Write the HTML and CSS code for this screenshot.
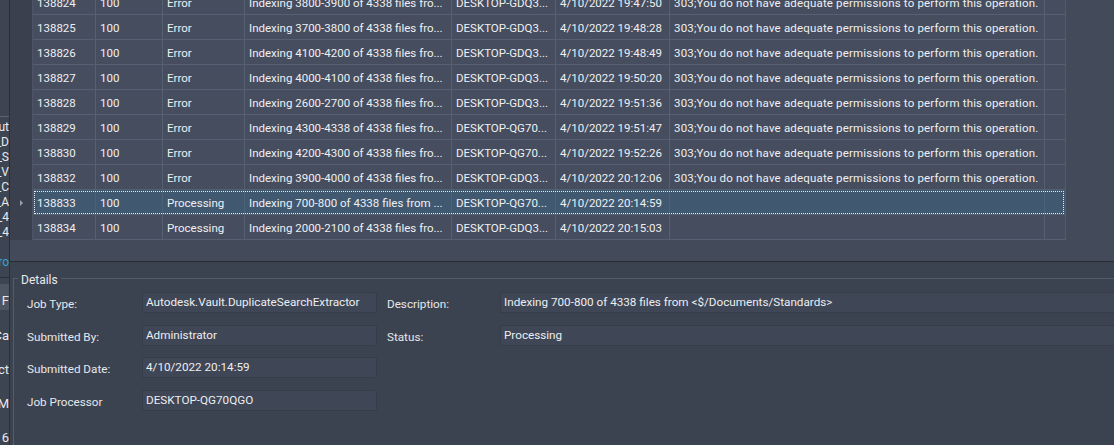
FILE: index.html
```html
<!DOCTYPE html>
<html lang="en">
<head>
<meta charset="utf-8">
<title>Job Queue</title>
<link rel="stylesheet" href="styles.css">
</head>
<body>
<div class="app">
  <aside class="side">
    <div class="side-top"></div>
    <div class="side-list">
      <div class="si">ut</div>
      <div class="si">_D</div>
      <div class="si">_S</div>
      <div class="si">_V</div>
      <div class="si">_C</div>
      <div class="si">_A</div>
      <div class="si">_4</div>
      <div class="si">_4</div>
      <div class="si"></div>
      <div class="si link">ro</div>
    </div>
    <div class="side-tree">
      <div class="ti sel">F</div>
      <div class="ti">Ca</div>
      <div class="ti">ct</div>
      <div class="ti">M</div>
      <div class="ti">16</div>
    </div>
  </aside>
  <main class="main">
    <section class="jobs">
      <div class="grid">
        <div class="row"><div class="rh"></div><div class="rc"><span class="c w1">138824</span><span class="c w2">100</span><span class="c w3">Error</span><span class="c w4">Indexing 3800-3900 of 4338 files fro...</span><span class="c w5">DESKTOP-GDQ3...</span><span class="c w6">4/10/2022 19:47:50</span><span class="c w7">303;You do not have adequate permissions to perform this operation.</span><span class="c w8"></span></div></div>
        <div class="row"><div class="rh"></div><div class="rc"><span class="c w1">138825</span><span class="c w2">100</span><span class="c w3">Error</span><span class="c w4">Indexing 3700-3800 of 4338 files fro...</span><span class="c w5">DESKTOP-GDQ3...</span><span class="c w6">4/10/2022 19:48:28</span><span class="c w7">303;You do not have adequate permissions to perform this operation.</span><span class="c w8"></span></div></div>
        <div class="row"><div class="rh"></div><div class="rc"><span class="c w1">138826</span><span class="c w2">100</span><span class="c w3">Error</span><span class="c w4">Indexing 4100-4200 of 4338 files fro...</span><span class="c w5">DESKTOP-GDQ3...</span><span class="c w6">4/10/2022 19:48:49</span><span class="c w7">303;You do not have adequate permissions to perform this operation.</span><span class="c w8"></span></div></div>
        <div class="row"><div class="rh"></div><div class="rc"><span class="c w1">138827</span><span class="c w2">100</span><span class="c w3">Error</span><span class="c w4">Indexing 4000-4100 of 4338 files fro...</span><span class="c w5">DESKTOP-GDQ3...</span><span class="c w6">4/10/2022 19:50:20</span><span class="c w7">303;You do not have adequate permissions to perform this operation.</span><span class="c w8"></span></div></div>
        <div class="row"><div class="rh"></div><div class="rc"><span class="c w1">138828</span><span class="c w2">100</span><span class="c w3">Error</span><span class="c w4">Indexing 2600-2700 of 4338 files fro...</span><span class="c w5">DESKTOP-GDQ3...</span><span class="c w6">4/10/2022 19:51:36</span><span class="c w7">303;You do not have adequate permissions to perform this operation.</span><span class="c w8"></span></div></div>
        <div class="row"><div class="rh"></div><div class="rc"><span class="c w1">138829</span><span class="c w2">100</span><span class="c w3">Error</span><span class="c w4">Indexing 4300-4338 of 4338 files fro...</span><span class="c w5">DESKTOP-QG70...</span><span class="c w6">4/10/2022 19:51:47</span><span class="c w7">303;You do not have adequate permissions to perform this operation.</span><span class="c w8"></span></div></div>
        <div class="row"><div class="rh"></div><div class="rc"><span class="c w1">138830</span><span class="c w2">100</span><span class="c w3">Error</span><span class="c w4">Indexing 4200-4300 of 4338 files fro...</span><span class="c w5">DESKTOP-QG70...</span><span class="c w6">4/10/2022 19:52:26</span><span class="c w7">303;You do not have adequate permissions to perform this operation.</span><span class="c w8"></span></div></div>
        <div class="row"><div class="rh"></div><div class="rc"><span class="c w1">138832</span><span class="c w2">100</span><span class="c w3">Error</span><span class="c w4">Indexing 3900-4000 of 4338 files fro...</span><span class="c w5">DESKTOP-GDQ3...</span><span class="c w6">4/10/2022 20:12:06</span><span class="c w7">303;You do not have adequate permissions to perform this operation.</span><span class="c w8"></span></div></div>
        <div class="row current"><div class="rh"><span class="arrow"></span></div><div class="rc"><span class="c w1">138833</span><span class="c w2">100</span><span class="c w3">Processing</span><span class="c w4">Indexing 700-800 of 4338 files from ...</span><span class="c w5">DESKTOP-QG70...</span><span class="c w6">4/10/2022 20:14:59</span><span class="c w7"></span><span class="c w8"></span></div></div>
        <div class="row"><div class="rh"></div><div class="rc"><span class="c w1">138834</span><span class="c w2">100</span><span class="c w3">Processing</span><span class="c w4">Indexing 2000-2100 of 4338 files fro...</span><span class="c w5">DESKTOP-GDQ3...</span><span class="c w6">4/10/2022 20:15:03</span><span class="c w7"></span><span class="c w8"></span></div></div>
      </div>
    </section>
    <section class="details">
      <fieldset class="group">
        <legend>Details</legend>
        <div class="fields">
          <span class="lbl">Job Type:</span><span class="box">Autodesk.Vault.DuplicateSearchExtractor</span>
          <span class="lbl">Description:</span><span class="box">Indexing 700-800 of 4338 files from &lt;$/Documents/Standards&gt;</span>
          <span class="lbl">Submitted By:</span><span class="box">Administrator</span>
          <span class="lbl">Status:</span><span class="box">Processing</span>
          <span class="lbl">Submitted Date:</span><span class="box">4/10/2022 20:14:59</span>
          <span></span><span></span>
          <span class="lbl">Job Processor</span><span class="box">DESKTOP-QG70QGO</span>
          <span></span><span></span>
        </div>
      </fieldset>
    </section>
  </main>
</div>
</body>
</html>
```
FILE: styles.css
```css
* { box-sizing: border-box; }
html, body {
  margin: 0;
  padding: 0;
  width: 1114px;
  height: 445px;
  overflow: hidden;
  background: #3b4250;
  font-family: Roboto, "Liberation Sans", Arial, sans-serif;
  color: #eceef1;
}
.app {
  display: flex;
  width: 1114px;
  height: 445px;
  overflow: hidden;
}

/* left, partially hidden panel */
.side {
  width: 10px;
  flex: none;
  border-right: 1px solid #2a2f38;
  background: #3d4452;
  overflow: hidden;
  display: flex;
  flex-direction: column;
  font-size: 12px;
}
.side-top {
  height: 117px;
  flex: none;
  border-bottom: 1px solid #5c6372;
}
.side-list {
  padding-top: 3px;
  height: 161px;
  flex: none;
  border-bottom: 1px solid #2a2f38;
}
.si {
  height: 15px;
  line-height: 15px;
  display: flex;
  justify-content: flex-end;
  white-space: nowrap;
  color: #e8eaee;
}
.si.link { color: #3aa1d9; }
.side-tree {
  padding-top: 6px;
}
.ti {
  height: 34px;
  line-height: 34px;
  display: flex;
  justify-content: flex-end;
  white-space: nowrap;
  overflow: hidden;
  color: #e8eaee;
  font-size: 13px;
}
.ti.sel {
  height: 26px;
  margin-bottom: 9px;
  background: #4e5563;
}

.main {
  flex: 1;
  display: flex;
  flex-direction: column;
  min-width: 0;
}

/* job grid */
.jobs {
  height: 262px;
  flex: none;
  background: #434a5a;
  border-bottom: 1px solid #282d36;
  overflow: hidden;
}
.grid {
  width: 1056px;
  margin-top: -10px;
  border-right: 1px solid #535b6c;
}
.row {
  display: flex;
  height: 25px;
}
.rh {
  width: 23px;
  flex: none;
  background: #3a404d;
  border-right: 1px solid #4d5465;
  display: flex;
  align-items: center;
  justify-content: center;
}
.arrow {
  width: 0;
  height: 0;
  border-top: 3px solid transparent;
  border-bottom: 3px solid transparent;
  border-left: 3px solid #9aa0ab;
}
.rc {
  display: flex;
  flex: 1;
  background: #464d5e;
}
.c {
  flex: none;
  height: 25px;
  line-height: 24px;
  padding: 1px 0 0 4px;
  border-right: 1px solid #566073;
  border-bottom: 1px solid #566073;
  font-size: 11.5px;
  white-space: nowrap;
  overflow: hidden;
  color: #eef0f3;
}
.w1 { width: 63px; }
.w2 { width: 67px; }
.w3 { width: 82px; }
.w4 { width: 207px; }
.w5 { width: 104px; }
.w6 { width: 114px; }
.w7 { width: 375px; letter-spacing: 0.17px; }
.w8 { width: 20px; border-right: none; }

.current .rc {
  background: #405870;
  outline: 1px dotted #e8ecf0;
  outline-offset: -2px;
}
.current .c {
  border-right-color: #4b6277;
}

/* details */
.details {
  flex: 1;
  background: #3b4250;
  padding: 7px 0 0 3px;
}
.group {
  margin: 0;
  padding: 0 0 0 4px;
  border: 1px solid #545b69;
  border-right: none;
  border-bottom: none;
  height: 200px;
}
.group legend {
  padding: 4px 3px 0;
  font-size: 12px;
  line-height: 14px;
  color: #e8eaee;
}
.fields {
  display: grid;
  grid-template-columns: 115px 235px 123px 620px;
  grid-auto-rows: 21px;
  row-gap: 11.5px;
  padding: 5px 0 0 9px;
}
.fields > span:nth-child(4n+3) { padding-left: 10px; }
.lbl {
  font-size: 11.7px;
  line-height: 21px;
  padding-top: 2px;
  color: #e6e8ec;
  white-space: nowrap;
}
.box {
  display: block;
  background: #3f4655;
  border: 1px solid #363c48;
  border-radius: 2px;
  font-size: 11.7px;
  line-height: 18px;
  padding: 0 3px;
  white-space: nowrap;
  overflow: hidden;
  color: #eceef1;
}
```
